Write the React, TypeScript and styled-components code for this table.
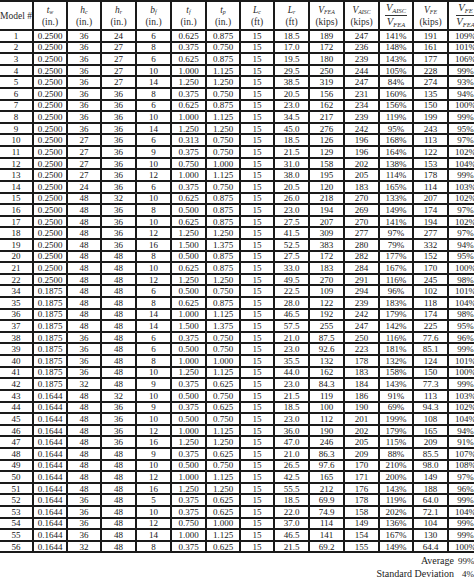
import React from "react";
import styled, { createGlobalStyle } from "styled-components";

const GlobalStyle = createGlobalStyle`
  html, body {
    margin: 0;
    padding: 0;
    background: #ffffff;
  }
`;

const data = `1 0.2500 36 24 6 0.625 0.875 15 18.5 189 247 141% 191 109%
2 0.2500 36 27 8 0.375 0.750 15 17.0 172 236 148% 161 101%
3 0.2500 36 27 6 0.625 0.875 15 19.5 180 239 143% 177 106%
4 0.2500 36 27 10 1.000 1.125 15 29.5 250 244 105% 228 99%
5 0.2500 36 27 14 1.250 1.250 15 38.5 319 247 84% 274 93%
6 0.2500 36 36 8 0.375 0.750 15 20.5 156 231 160% 135 94%
7 0.2500 36 36 6 0.625 0.875 15 23.0 162 234 156% 150 100%
8 0.2500 36 36 10 1.000 1.125 15 34.5 217 239 119% 199 99%
9 0.2500 36 36 14 1.250 1.250 15 45.0 276 242 95% 243 95%
10 0.2500 27 36 6 0.313 0.750 15 18.5 126 196 168% 113 97%
11 0.2500 27 36 9 0.375 0.750 15 21.5 129 196 164% 122 102%
12 0.2500 27 36 10 0.750 1.000 15 31.0 158 202 138% 153 104%
13 0.2500 27 36 12 1.000 1.125 15 38.0 195 205 114% 178 99%
14 0.2500 24 36 6 0.375 0.750 15 20.5 120 183 165% 114 103%
15 0.2500 48 32 10 0.625 0.875 15 26.0 218 270 133% 207 102%
16 0.2500 48 36 8 0.500 0.875 15 23.0 194 269 149% 174 97%
17 0.2500 48 36 10 0.625 0.875 15 27.5 207 270 141% 194 102%
18 0.2500 48 36 12 1.250 1.250 15 41.5 309 277 97% 277 97%
19 0.2500 48 36 16 1.500 1.375 15 52.5 383 280 79% 332 94%
20 0.2500 48 48 8 0.500 0.875 15 27.5 172 282 177% 152 95%
21 0.2500 48 48 10 0.625 0.875 15 33.0 183 284 167% 170 100%
22 0.2500 48 48 12 1.250 1.250 15 49.5 270 291 116% 245 98%
34 0.1875 48 48 6 0.500 0.750 15 22.5 109 294 96% 102 101%
35 0.1875 48 48 8 0.625 0.875 15 28.0 122 239 183% 118 104%
36 0.1875 48 48 14 1.000 1.125 15 46.5 192 242 179% 174 98%
37 0.1875 48 48 14 1.500 1.375 15 57.5 255 247 142% 225 95%
38 0.1875 36 48 6 0.375 0.750 15 21.0 87.5 250 116% 77.6 96%
39 0.1875 36 48 6 0.500 0.750 15 23.0 92.6 223 181% 85.1 99%
40 0.1875 36 48 8 1.000 1.000 15 35.5 132 178 132% 124 101%
41 0.1875 36 48 10 1.250 1.125 15 44.0 162 183 158% 150 100%
42 0.1875 32 48 9 0.375 0.625 15 23.0 84.3 184 143% 77.3 99%
43 0.1644 48 32 10 0.500 0.750 15 21.5 119 186 91% 113 103%
44 0.1644 48 36 9 0.375 0.625 15 18.5 100 190 69% 94.3 102%
45 0.1644 48 36 10 0.500 0.750 15 23.0 112 201 199% 108 104%
46 0.1644 48 36 12 1.000 1.125 15 36.0 190 202 179% 165 94%
47 0.1644 48 36 16 1.250 1.250 15 47.0 246 205 115% 209 91%
48 0.1644 48 48 9 0.375 0.625 15 21.0 86.3 209 88% 85.5 107%
49 0.1644 48 48 10 0.500 0.750 15 26.5 97.6 170 210% 98.0 108%
50 0.1644 48 48 12 1.000 1.125 15 42.5 165 171 200% 149 97%
51 0.1644 48 48 16 1.250 1.250 15 55.5 212 176 143% 188 96%
52 0.1644 36 48 5 0.375 0.625 15 18.5 69.9 178 119% 64.0 99%
53 0.1644 36 48 10 0.375 0.625 15 22.0 74.9 158 202% 72.1 104%
54 0.1644 36 48 12 0.750 1.000 15 37.0 114 149 136% 104 99%
55 0.1644 36 48 14 1.000 1.125 15 46.5 141 154 167% 130 99%
56 0.1644 32 48 8 0.375 0.625 15 21.5 69.2 155 149% 64.4 100%`
  .split("\n")
  .map((line) => line.trim().split(" "));

const colWidths = [34, 34, 34, 35, 35, 35, 34, 34, 35, 35, 35, 34, 35, 35];

type HeadCell =
  | { kind: "plain"; text: string }
  | { kind: "sym"; v: string; s: string; unit: string }
  | { kind: "ratio"; top: string; bottom: string };

const head: HeadCell[] = [
  { kind: "plain", text: "Model #" },
  { kind: "sym", v: "t", s: "w", unit: "(in.)" },
  { kind: "sym", v: "h", s: "c", unit: "(in.)" },
  { kind: "sym", v: "h", s: "r", unit: "(in.)" },
  { kind: "sym", v: "b", s: "f", unit: "(in.)" },
  { kind: "sym", v: "t", s: "f", unit: "(in.)" },
  { kind: "sym", v: "t", s: "p", unit: "(in.)" },
  { kind: "sym", v: "L", s: "c", unit: "(ft)" },
  { kind: "sym", v: "L", s: "r", unit: "(ft)" },
  { kind: "sym", v: "V", s: "FEA", unit: "(kips)" },
  { kind: "sym", v: "V", s: "AISC", unit: "(kips)" },
  { kind: "ratio", top: "AISC", bottom: "FEA" },
  { kind: "sym", v: "V", s: "FE", unit: "(kips)" },
  { kind: "ratio", top: "FE", bottom: "FEA" },
];

const Page = styled.div`
  width: 474px;
  height: 577px;
  overflow: hidden;
  font-family: "Liberation Serif", "Times New Roman", serif;
  color: #151515;
`;

const Sheet = styled.div`
  width: 484px;
  margin-left: -2px;
`;

const Table = styled.table`
  width: 484px;
  border-collapse: collapse;
  table-layout: fixed;
`;

const HeadRow = styled.tr`
  height: 29px;
`;

const Th = styled.th`
  padding: 0;
  border: 2px solid #1a1a1a;
  font-weight: normal;
  font-size: 9.5px;
  line-height: 10px;
  text-align: center;
  vertical-align: middle;
  color: #2a2a2a;
  white-space: nowrap;
  overflow: hidden;
`;

const Row = styled.tr`
  height: 11.62px;
`;

const Td = styled.td`
  padding: 0;
  border: 2px solid #1a1a1a;
  font-size: 9px;
  line-height: 8px;
  text-align: center;
  vertical-align: middle;
  white-space: nowrap;
  overflow: hidden;
`;

const Var = styled.span`
  font-style: italic;
  display: block;
  margin-bottom: 1px;
`;

const Sub = styled.sub`
  font-size: 0.62em;
  vertical-align: baseline;
  position: relative;
  top: 0.25em;
`;

const Fraction = styled.span`
  display: inline-flex;
  flex-direction: column;
  align-items: stretch;
  font-style: italic;
  font-size: 10.5px;
  line-height: 12px;
`;

const Numer = styled.span`
  border-bottom: 1px solid #333;
  padding: 0 1px;
`;

const Footer = styled.div`
  display: grid;
  grid-template-columns: auto 16px;
  column-gap: 4px;
  justify-content: end;
  margin-top: 2px;
  padding-right: 8px;
  font-size: 10px;
  line-height: 12.5px;
  color: #222;
`;

const FootLabel = styled.span`
  text-align: right;
`;

const FootValue = styled.span`
  text-align: right;
  font-size: 9px;
`;

function Symbol({ v, s }: { v: string; s: string }) {
  return (
    <>
      {v}
      <Sub>{s}</Sub>
    </>
  );
}

function HeadContent({ cell }: { cell: HeadCell }) {
  if (cell.kind === "plain") return <>{cell.text}</>;
  if (cell.kind === "ratio")
    return (
      <Fraction>
        <Numer>
          <Symbol v="V" s={cell.top} />
        </Numer>
        <span>
          <Symbol v="V" s={cell.bottom} />
        </span>
      </Fraction>
    );
  return (
    <>
      <Var>
        <Symbol v={cell.v} s={cell.s} />
      </Var>
      {cell.unit}
    </>
  );
}

export default function App() {
  return (
    <Page>
      <GlobalStyle />
      <Sheet>
        <Table>
          <colgroup>
            {colWidths.map((w, i) => (
              <col key={i} style={{ width: w }} />
            ))}
          </colgroup>
          <thead>
            <HeadRow>
              {head.map((cell, i) => (
                <Th key={i}>
                  <HeadContent cell={cell} />
                </Th>
              ))}
            </HeadRow>
          </thead>
          <tbody>
            {data.map((row) => (
              <Row key={row[0]}>
                {row.map((value, i) => (
                  <Td key={i}>{value}</Td>
                ))}
              </Row>
            ))}
          </tbody>
        </Table>
        <Footer>
          <FootLabel>Average</FootLabel>
          <FootValue>99%</FootValue>
          <FootLabel>Standard Deviation</FootLabel>
          <FootValue>4%</FootValue>
        </Footer>
      </Sheet>
    </Page>
  );
}
